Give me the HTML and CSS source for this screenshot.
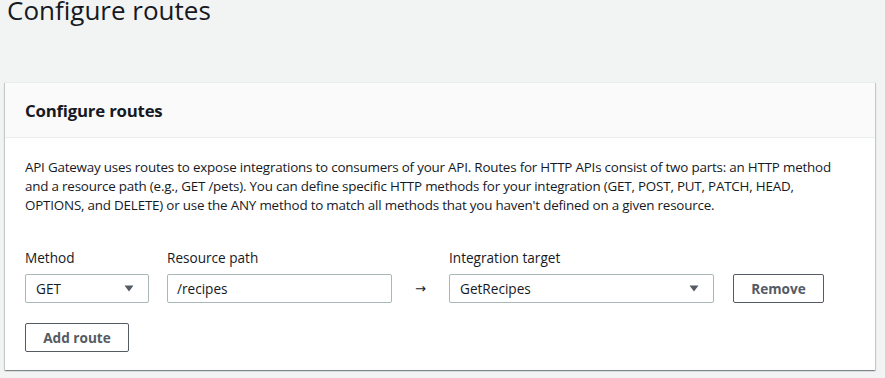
FILE: index.html
```html
<!DOCTYPE html>
<html lang="en">
<head>
<meta charset="utf-8">
<link rel="stylesheet" href="styles.css">
</head>
<body>
<h1 class="page-title">Configure routes</h1>
<section class="card">
  <header class="card-header"><h2>Configure routes</h2></header>
  <div class="card-body">
    <p class="desc">API Gateway uses routes to expose integrations to consumers of your API. Routes for HTTP APIs consist of two parts: an HTTP method and a resource path (e.g., GET /pets). You can define specific HTTP methods for your integration (GET, POST, PUT, PATCH, HEAD, OPTIONS, and DELETE) or use the ANY method to match all methods that you haven't defined on a given resource.</p>
    <div class="route-row">
      <div class="field f-method">
        <div class="label">Method</div>
        <div class="select"><span>GET</span><svg class="caret" width="10" height="7" viewBox="0 0 10 7"><path d="M0.5 0.5h9L5 6.5z" fill="#545b64"/></svg></div>
      </div>
      <div class="field f-path">
        <div class="label">Resource path</div>
        <div class="input"><span>/recipes</span></div>
      </div>
      <div class="arrow">→</div>
      <div class="field f-target">
        <div class="label">Integration target</div>
        <div class="select"><span>GetRecipes</span><svg class="caret" width="10" height="7" viewBox="0 0 10 7"><path d="M0.5 0.5h9L5 6.5z" fill="#545b64"/></svg></div>
      </div>
      <div class="field f-remove">
        <div class="label">&nbsp;</div>
        <button class="btn btn-remove">Remove</button>
      </div>
    </div>
    <button class="btn btn-add">Add route</button>
  </div>
</section>
</body>
</html>
```

FILE: styles.css
```css
html, body {
  margin: 0;
  padding: 0;
  background: #f2f3f3;
  font-family: "Open Sans", "Noto Sans", sans-serif;
  color: #16191f;
}
body {
  width: 885px;
  height: 378px;
  overflow: hidden;
}
.page-title {
  margin: -10px 0 0 7px;
  font-size: 26px;
  font-weight: 400;
  line-height: 40px;
  height: 40px;
  letter-spacing: 0;
}
.card {
  margin: 52px 0 0 5px;
  width: 870px;
  height: 288px;
  background: #fff;
  box-shadow: 0 1px 1px 0 rgba(0,28,36,.3), 1px 1px 1px 0 rgba(0,28,36,.15), -1px 1px 1px 0 rgba(0,28,36,.15);
  border-top: 1px solid #eaeded;
  box-sizing: border-box;
}
.card-header {
  background: #fafafa;
  border-bottom: 1px solid #eaeded;
  height: 55px;
  box-sizing: border-box;
  display: flex;
  align-items: center;
  padding-left: 20px;
}
.card-header h2 {
  margin: 0;
  font-size: 16.8px;
  font-weight: 700;
  letter-spacing: -0.2px;
}
.card-body {
  padding: 20px 20px 0 20px;
}
.desc {
  margin: 0;
  font-size: 13.4px;
  line-height: 19.2px;
  width: 820px;
  letter-spacing: -0.2px;
}
.route-row {
  display: flex;
  align-items: flex-start;
  margin-top: 32px;
}
.label {
  font-size: 13.6px;
  line-height: 20px;
  height: 20px;
  margin-bottom: 6px;
}
.select, .input {
  height: 29px;
  box-sizing: border-box;
  border: 1px solid #aab7b8;
  border-radius: 2px;
  display: flex;
  align-items: center;
  justify-content: space-between;
  padding: 0 14px 0 10px;
  font-size: 13.6px;
}
.f-method { width: 124px; }
.f-path { width: 225px; margin-left: 18px; }
.f-path .input { padding-left: 9px; }
.arrow {
  width: 57px;
  text-align: center;
  margin-top: 26px;
  line-height: 29px;
  font-family: "DejaVu Sans", sans-serif;
  font-size: 13px;
}
.f-target { width: 265px; }
.f-remove { margin-left: 19px; }
.btn {
  font-family: inherit;
  background: #fff;
  color: #545b64;
  border: 1px solid #545b64;
  border-radius: 2px;
  font-size: 13.6px;
  font-weight: 700;
  height: 29px;
  box-sizing: border-box;
  padding: 0;
  cursor: pointer;
}
.btn-remove { width: 91px; }
.btn-add { width: 104px; margin-top: 20px; }
```
